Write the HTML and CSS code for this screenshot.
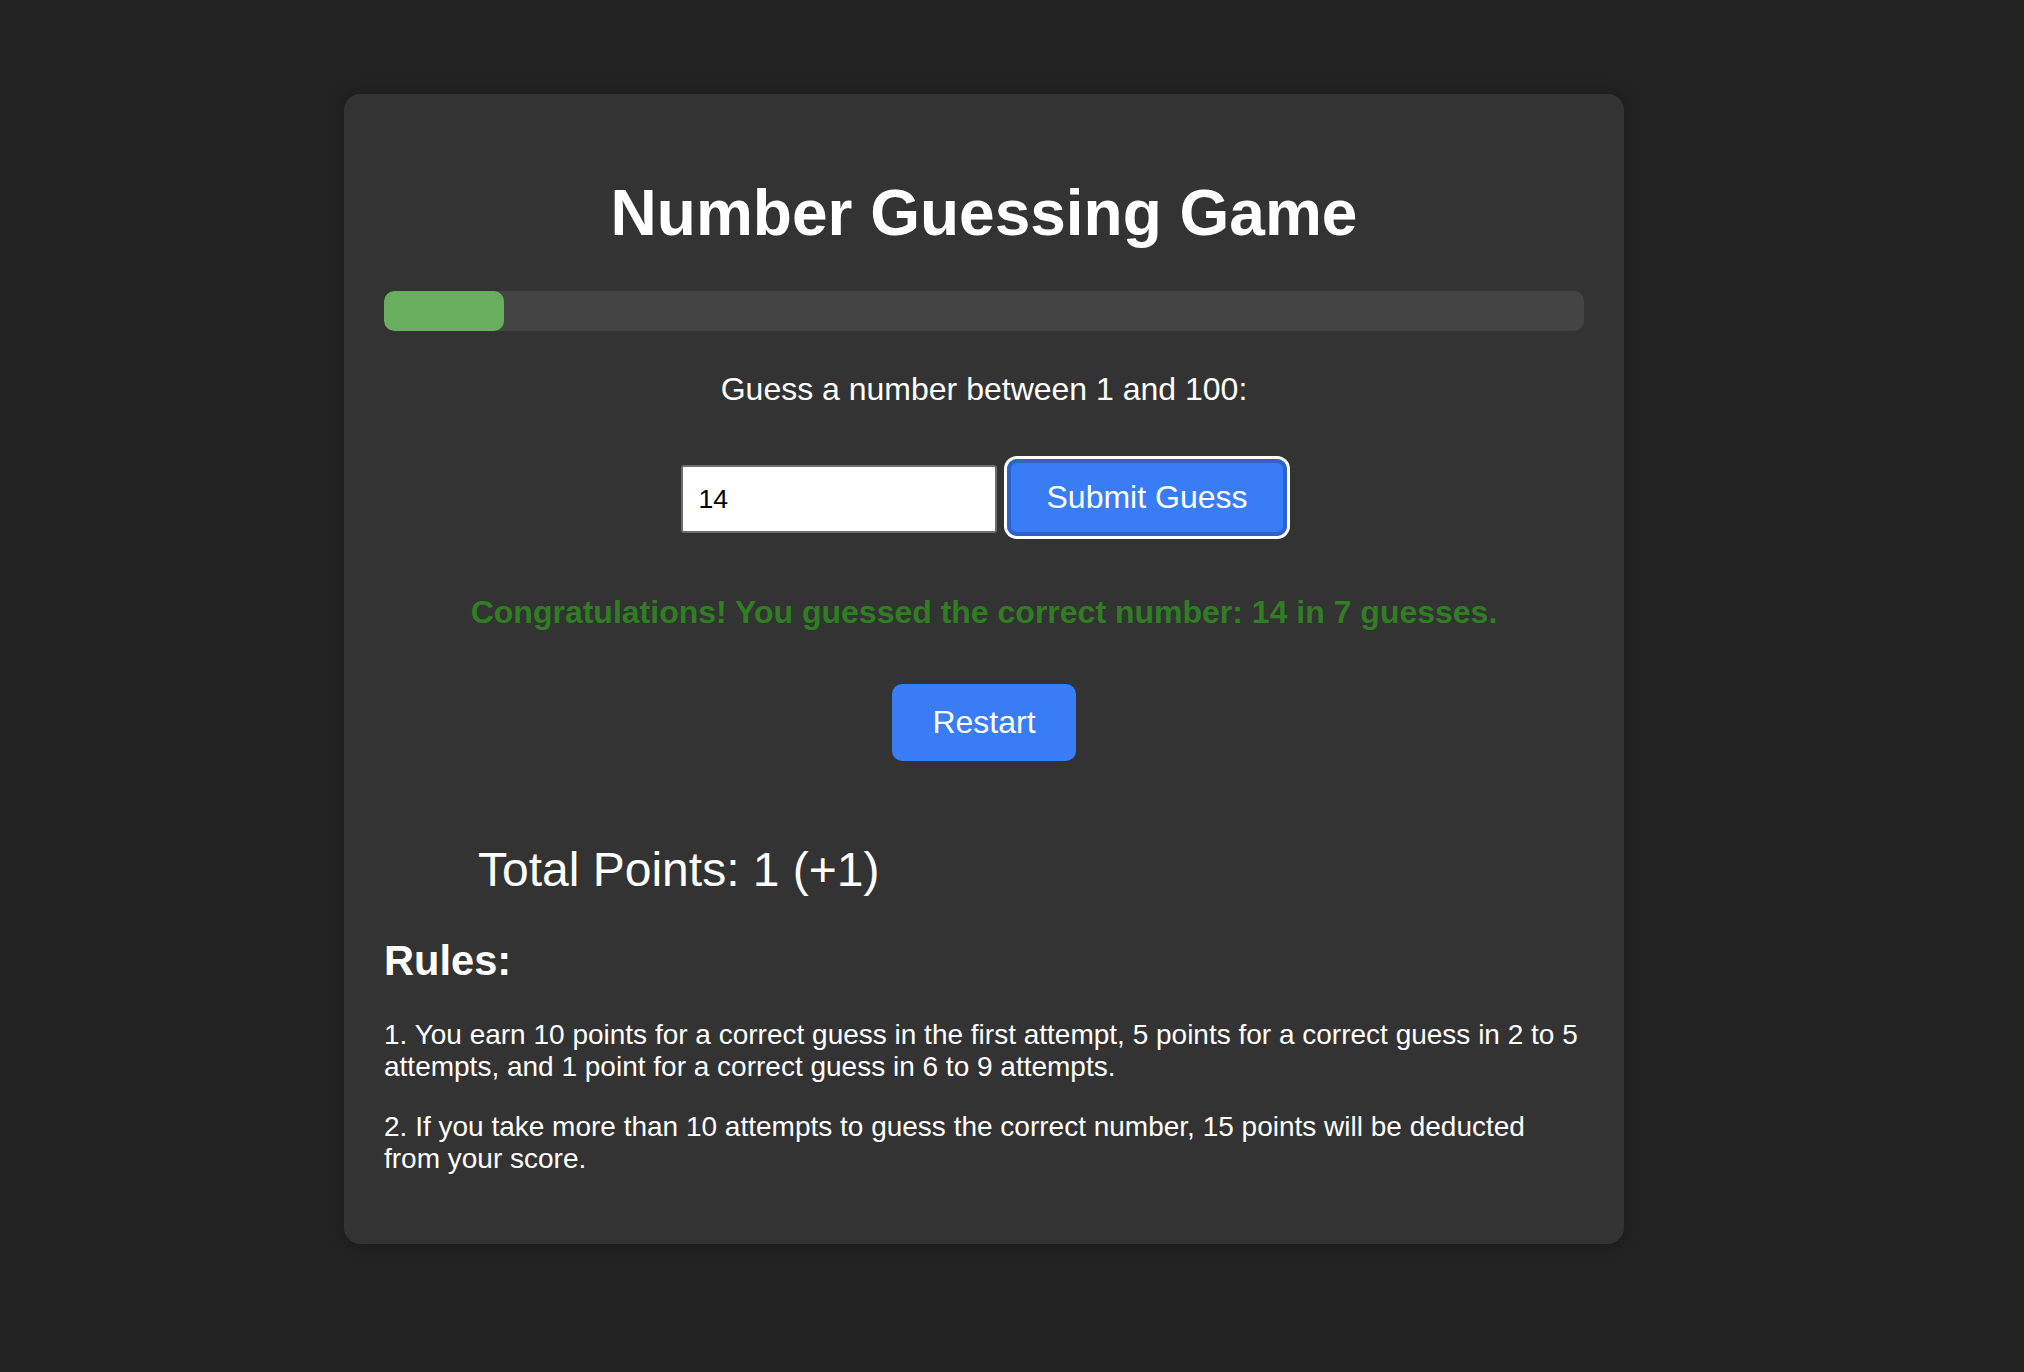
FILE: index.html
```html
<!DOCTYPE html>
<html lang="en">
<head>
<meta charset="utf-8">
<title>Number Guessing Game</title>
<link rel="stylesheet" href="styles.css">
</head>
<body>
<div class="card">
  <h1 class="title">Number Guessing Game</h1>
  <div class="progress"><div class="progress-fill" style="width: 10%"></div></div>
  <p class="label">Guess a number between 1 and 100:</p>
  <div class="guess-row">
    <input class="guess-input" type="text" value="14">
    <button class="btn btn-focused">Submit Guess</button>
  </div>
  <p class="message">Congratulations! You guessed the correct number: 14 in 7 guesses.</p>
  <div class="restart-wrap"><button class="btn">Restart</button></div>
  <div class="points">Total Points: 1 (+1)</div>
  <div class="rules">
    <h2 class="rules-title">Rules:</h2>
    <p class="rule">1. You earn 10 points for a correct guess in the first attempt, 5 points for a correct guess in 2 to 5 attempts, and 1 point for a correct guess in 6 to 9 attempts.</p>
    <p class="rule">2. If you take more than 10 attempts to guess the correct number, 15 points will be deducted from your score.</p>
  </div>
</div>
</body>
</html>
```
FILE: styles.css
```css
html, body {
  margin: 0;
  padding: 0;
}
body {
  background: #222222;
  font-family: "Liberation Sans", Arial, Helvetica, sans-serif;
  color: #ffffff;
  padding-top: 94px;
  height: 1278px;
}
.card {
  box-sizing: border-box;
  width: 1280px;
  margin-left: 344px;
  padding: 40px;
  background: #333333;
  border-radius: 16px;
  box-shadow: 0 0 16px rgba(0, 0, 0, 0.25);
}
.title {
  margin: 43px 0 0;
  font-size: 64px;
  line-height: 73.6px;
  font-weight: bold;
  text-align: center;
}
.progress {
  margin-top: 40px;
  height: 40px;
  background: #444444;
  border-radius: 10px;
  overflow: hidden;
}
.progress-fill {
  height: 100%;
  background: #69ae5e;
  border-radius: 10px;
}
.label {
  margin: 40px 0 0;
  font-size: 32px;
  line-height: 36.8px;
  text-align: center;
}
.guess-row {
  margin-top: 52px;
  display: flex;
  justify-content: center;
  align-items: flex-start;
  gap: 10px;
}
.guess-input {
  box-sizing: border-box;
  width: 316px;
  height: 68px;
  margin: 6px 0 0;
  padding: 0 16px;
  border: 2px solid #6e6e6e;
  border-radius: 3px;
  background: #ffffff;
  color: #000000;
  font-family: "Liberation Sans", Arial, Helvetica, sans-serif;
  font-size: 26.67px;
  outline: none;
}
.btn {
  margin: 0;
  padding: 20px 40px;
  border: none;
  border-radius: 10px;
  background: #387cf6;
  color: #ffffff;
  font-family: "Liberation Sans", Arial, Helvetica, sans-serif;
  font-size: 32px;
  line-height: 36.8px;
  cursor: pointer;
}
.btn-focused {
  box-shadow: inset 0 0 0 4px #2c63cc, 0 0 0 3px #ffffff;
}
.message {
  margin: 58px 0 0;
  font-size: 32px;
  line-height: 36.8px;
  font-weight: bold;
  color: #307d24;
  text-align: center;
}
.restart-wrap {
  margin-top: 53px;
  display: flex;
  justify-content: center;
}
.points {
  margin-top: 81px;
  padding-left: 94px;
  font-size: 48px;
  line-height: 55.2px;
}
.rules {
  font-size: 28px;
}
.rules-title {
  margin: 40px 0 34px;
  font-size: 41.6px;
  line-height: 47.8px;
  font-weight: bold;
}
.rule {
  margin: 0 0 28px;
  line-height: 32.2px;
}
```
